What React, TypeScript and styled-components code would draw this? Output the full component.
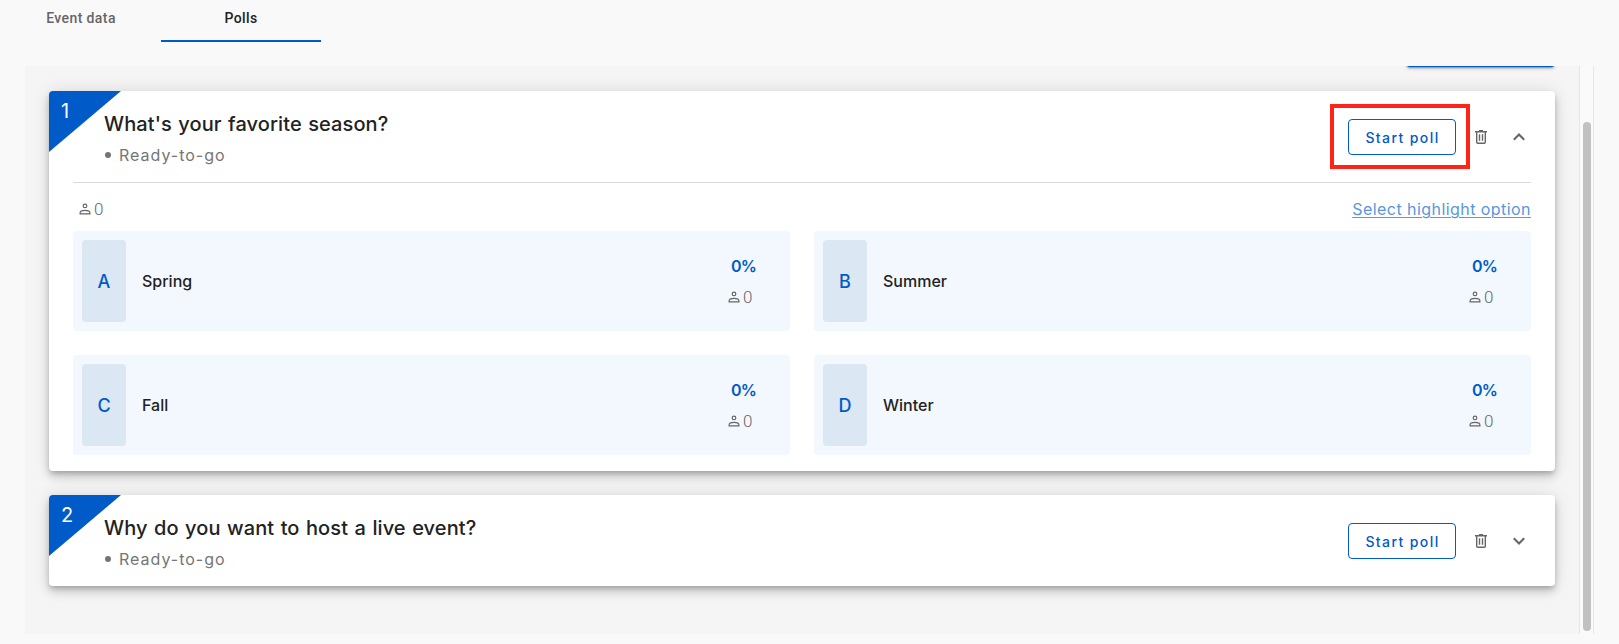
import React from "react";
import styled, { createGlobalStyle } from "styled-components";

const PRIMARY = "#005ac8";

const GlobalStyle = createGlobalStyle`
  * { box-sizing: border-box; }
  body {
    margin: 0;
    background: #f9f9f9;
    color: #222;
    font-family: Inter, "Liberation Sans", sans-serif;
  }
  button { font: inherit; padding: 0; border: 0; background: none; cursor: pointer; }
`;

const Page = styled.div`
  height: 644px;
  overflow: hidden;
`;

const Tabs = styled.nav`
  display: flex;
  height: 42px;
  padding-left: 1px;
`;

const Tab = styled.button<{ $active?: boolean }>`
  width: 160px;
  height: 42px;
  padding-bottom: ${(p) => (p.$active ? 4 : 6)}px;
  border-bottom: ${(p) => (p.$active ? `2px solid ${PRIMARY}` : "none")};
  color: ${(p) => (p.$active ? "#222" : "#666")};
  font-family: Roboto, sans-serif;
  font-size: 14px;
  font-weight: 500;
  letter-spacing: 0.4px;
`;

const ScrollArea = styled.div`
  display: flex;
  width: 1569px;
  height: 568px;
  margin: 24px 0 0 25px;
`;

const Panel = styled.main`
  display: flex;
  flex-direction: column;
  gap: 24px;
  flex: 1;
  padding: 0 24px;
  overflow: hidden;
  background: #f5f5f5;
`;

const AddButton = styled.button`
  flex: none;
  align-self: flex-end;
  width: 149px;
  height: 36px;
  margin-top: -35px;
  border-radius: 4px;
  background: ${PRIMARY};
  box-shadow: 0 3px 1px -2px rgba(0, 0, 0, 0.2), 0 2px 2px rgba(0, 0, 0, 0.14),
    0 1px 5px rgba(0, 0, 0, 0.12);
`;

const Track = styled.div`
  width: 15px;
  padding: 56px 3px 3px;
  border: solid #e6e6e6;
  border-width: 0 1px;
  background: #fafafa;
`;

const Thumb = styled.div`
  width: 8px;
  height: 509px;
  border-radius: 4px;
  background: #c1c1c1;
`;

const Card = styled.section`
  position: relative;
  flex: none;
  padding: 0 24px;
  border-radius: 4px;
  background: #fff;
  box-shadow: 0 3px 5px -1px rgba(0, 0, 0, 0.2), 0 6px 10px rgba(0, 0, 0, 0.14),
    0 1px 18px rgba(0, 0, 0, 0.12);
`;

const Corner = styled.div`
  position: absolute;
  top: 0;
  left: 0;
  width: 72px;
  height: 61px;
  padding: 8px 0 0 12px;
  border-top-left-radius: 4px;
  background: ${PRIMARY};
  clip-path: polygon(0 0, 100% 0, 0 100%);
  color: #fff;
  font-size: 20px;
  line-height: 24px;
`;

const CardHead = styled.header`
  display: flex;
  align-items: center;
  height: 91px;
  padding-left: 32px;
`;

const Heading = styled.div`
  flex: 1;
  padding-top: 3px;
`;

const Title = styled.h2`
  margin: 0 0 0 -1px;
  font-size: 20px;
  font-weight: 500;
  line-height: 28px;
  letter-spacing: 0.1px;
  word-spacing: 1px;
`;

const Status = styled.div`
  display: flex;
  align-items: center;
  gap: 8px;
  margin-top: 5px;
  color: #757575;
  font-size: 16px;
  line-height: 24px;
  letter-spacing: 1px;

  &::before {
    content: "";
    width: 6px;
    height: 6px;
    border-radius: 50%;
    background: #757575;
  }
`;

const StartWrap = styled.div`
  position: relative;
  margin-right: 19px;
`;

const StartButton = styled.button`
  display: block;
  width: 108px;
  height: 36px;
  padding: 1px 0 0 1px;
  border: 1px solid ${PRIMARY};
  border-radius: 4px;
  color: ${PRIMARY};
  font-size: 14px;
  font-weight: 500;
  letter-spacing: 1.4px;
`;

const Callout = styled.span`
  position: absolute;
  inset: -15px -14px -14px -18px;
  border: 4px solid #ff2419;
  pointer-events: none;
`;

const IconButton = styled.button`
  display: flex;
  justify-content: center;
  width: 12px;
  color: #666;

  & + & {
    width: 12px;
    margin: 0 6px 0 26px;
  }
  svg { flex: none; }
`;

const Summary = styled.div`
  display: flex;
  justify-content: space-between;
  align-items: center;
  height: 49px;
  padding: 4px 0 0 6px;
  border-top: 1px solid #dadada;
`;

const Count = styled.span`
  display: inline-flex;
  align-items: center;
  gap: 3px;
  height: 24px;
  color: #666;
  font: 300 17px/24px Roboto, sans-serif;
`;

const HighlightLink = styled.a`
  color: #5898da;
  font-size: 16px;
  letter-spacing: 0.44px;
  text-decoration: underline;
  text-decoration-thickness: 1px;
  text-underline-offset: 2px;
`;

const Options = styled.div`
  display: grid;
  grid-template-columns: 1fr 1fr;
  gap: 24px;
  padding-bottom: 16px;
`;

const Option = styled.div`
  display: flex;
  align-items: center;
  height: 100px;
  padding: 9px 31px 9px 9px;
  border-radius: 4px;
  background: #f3f8ff;
`;

const Letter = styled.div`
  display: grid;
  place-items: center;
  width: 44px;
  height: 82px;
  margin-right: 16px;
  border-radius: 4px;
  background: #dbe7f3;
  color: ${PRIMARY};
  font-size: 18px;
  font-weight: 500;
`;

const Label = styled.div`
  flex: 1;
  font-size: 16px;
  font-weight: 500;
`;

const Result = styled.div`
  width: 31px;
`;

const Percent = styled.div`
  margin: 0 0 7px 3px;
  color: ${PRIMARY};
  font-size: 16px;
  font-weight: 600;
  line-height: 24px;
  letter-spacing: -0.8px;
`;

const Person = () => (
  <svg width="12" height="12" viewBox="0 0 12 12" fill="none" stroke="currentColor" strokeWidth="1.2">
    <circle cx="6" cy="2.9" r="1.8" />
    <path d="M1.1 10.8V9.9C1.1 8.4 3.6 7.4 6 7.4s4.9 1 4.9 2.5v.9z" />
  </svg>
);

const Trash = () => (
  <svg width="12" height="14" viewBox="0 0 12 14" fill="none" stroke="currentColor" strokeWidth="1.4">
    <path d="M0 1.7h12M4 .7h4M1.7 2v10.3q0 1 1 1h6.6q1 0 1-1V2M4.5 4.2v6.6M7.5 4.2v6.6" />
  </svg>
);

const Chevron = ({ up }: { up?: boolean }) => (
  <svg width="12" height="8" viewBox="0 0 12 8" fill="none" stroke="currentColor" strokeWidth="2.1">
    <path d={up ? "M.8 6.8 6 1.6l5.2 5.2" : "M.8 1.2 6 6.4l5.2-5.2"} />
  </svg>
);

const Participants = () => (
  <Count>
    <Person />0
  </Count>
);

type PollProps = { index: number; title: string; options?: string[]; marked?: boolean };

function Poll({ index, title, options, marked }: PollProps) {
  return (
    <Card>
      <Corner>{index}</Corner>
      <CardHead>
        <Heading>
          <Title>{title}</Title>
          <Status>Ready-to-go</Status>
        </Heading>
        <StartWrap>
          <StartButton>Start poll</StartButton>
          {marked && <Callout />}
        </StartWrap>
        <IconButton aria-label="Delete"><Trash /></IconButton>
        <IconButton aria-label="Toggle"><Chevron up={!!options} /></IconButton>
      </CardHead>
      {options && (
        <>
          <Summary>
            <Participants />
            <HighlightLink>Select highlight option</HighlightLink>
          </Summary>
          <Options>
            {options.map((name, i) => (
              <Option key={name}>
                <Letter>{"ABCD"[i]}</Letter>
                <Label>{name}</Label>
                <Result>
                  <Percent>0%</Percent>
                  <Participants />
                </Result>
              </Option>
            ))}
          </Options>
        </>
      )}
    </Card>
  );
}

export default function App() {
  return (
    <Page>
      <GlobalStyle />
      <Tabs>
        <Tab>Event data</Tab>
        <Tab $active>Polls</Tab>
      </Tabs>
      <ScrollArea>
        <Panel>
          <AddButton aria-label="Add poll" />
          <Poll index={1} title="What's your favorite season?" options={["Spring", "Summer", "Fall", "Winter"]} marked />
          <Poll index={2} title="Why do you want to host a live event?" />
        </Panel>
        <Track>
          <Thumb />
        </Track>
      </ScrollArea>
    </Page>
  );
}
